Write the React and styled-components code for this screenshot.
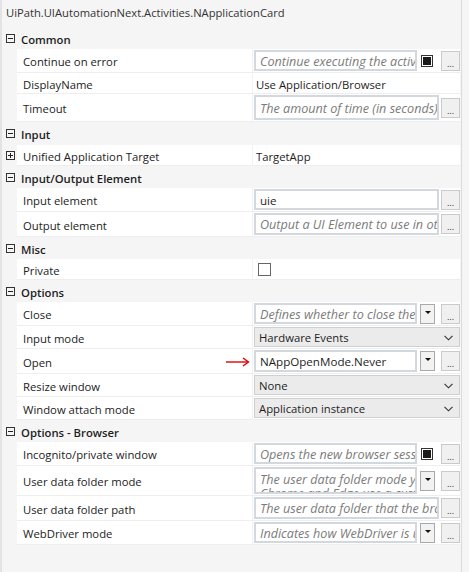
import React from 'react';
import styled, { createGlobalStyle } from 'styled-components';

const GlobalStyle = createGlobalStyle`
    html, body {
        margin: 0;
        padding: 0;
        background: #f5f5f5;
    }
    body {
        font-family: "Open Sans", "Noto Sans", sans-serif;
        font-size: 11.3px;
        color: #222;
    }
`;

const Window = styled.div`
    display: flex;
    width: 469px;
    height: 572px;
    overflow: hidden;
    background: #f5f5f5;
`;

const Panel = styled.div`
    display: flex;
    flex-direction: column;
    width: 458px;
    border-left: 2px solid #e3e3e3;
    border-right: 1px solid #dcdcdc;
    padding-right: 1px;
`;

const Title = styled.div`
    height: 28px;
    display: flex;
    align-items: center;
    padding-left: 4px;
    padding-bottom: 4px;
    box-sizing: border-box;
    color: #333;
    font-size: 11.2px;
`;

const CategoryRow = styled.div`
    height: ${p => p.$h}px;
    display: flex;
    align-items: center;
    font-weight: 600;
    color: #1e1e1e;
`;

const CategoryName = styled.span`
    padding: 2px 0 0 4px;
`;

const Gutter = styled.div`
    width: 15px;
    flex: none;
    display: flex;
    align-items: center;
    justify-content: center;
    align-self: stretch;
`;

const ExpandBox = styled.span`
    position: relative;
    width: 9px;
    height: 9px;
    box-sizing: border-box;
    border: 1px solid #333;
    margin-left: 1px;

    &:before {
        content: "";
        position: absolute;
        left: 1px;
        right: 1px;
        top: 3px;
        height: 1px;
        background: #222;
    }

    &:after {
        content: "";
        display: ${p => (p.$plus ? 'block' : 'none')};
        position: absolute;
        top: 1px;
        bottom: 1px;
        left: 3px;
        width: 1px;
        background: #222;
    }
`;

const PropRow = styled.div`
    display: flex;
    height: ${p => p.$h}px;
    box-sizing: border-box;
`;

const Cells = styled.div`
    flex: 1;
    display: grid;
    grid-template-columns: 236px 1fr;
    grid-template-rows: minmax(0, 1fr);
    overflow: hidden;
    background: #fff;
    border-bottom: 1px solid #eeeeee;
`;

const Label = styled.div`
    display: flex;
    align-items: center;
    padding: 2px 0 0 6px;
    border-right: 1px solid #f2f2f2;
    white-space: nowrap;
    overflow: hidden;
    color: #222;
`;

const Value = styled.div`
    display: flex;
    align-items: center;
    padding-left: 1px;
    min-width: 0;
    min-height: 0;
`;

const PlainValue = styled.span`
    padding: 2px 0 0 2px;
    color: #1e1e1e;
`;

const TextBox = styled.div`
    flex: 1;
    min-width: 0;
    min-height: 0;
    align-self: stretch;
    margin: 1px 0;
    box-sizing: border-box;
    border: 2px solid #d2d8de;
    background: #fff;
    padding: ${p => (p.$wrap ? '4px 0 0 4px' : '1px 0 0 4px')};
    display: flex;
    align-items: ${p => (p.$wrap ? 'flex-start' : 'center')};
    overflow: hidden;
    white-space: ${p => (p.$wrap ? 'normal' : 'nowrap')};
    font-style: ${p => (p.$hint ? 'italic' : 'normal')};
    font-size: ${p => (p.$hint ? 12.6 : 11.6)}px;
    color: ${p => (p.$hint ? '#7b7b7b' : '#1e1e1e')};
    line-height: ${p => (p.$wrap ? '14px' : 'normal')};
`;

/* the wrapped hint is wider than the box, so its first line is clipped too */
const WrapText = styled.span`
    display: block;
    flex: none;
    width: 250px;
`;

const DotsButton = styled.div`
    width: 19px;
    height: 20px;
    flex: none;
    margin-left: 2px;
    box-sizing: border-box;
    border: 1px solid #cacaca;
    background: #f0f0f0;
    display: flex;
    align-items: flex-end;
    justify-content: center;
    font-size: 9px;
    line-height: 13px;
    color: #333;
`;

const DropButton = styled.div`
    width: 15px;
    height: 20px;
    flex: none;
    margin: 0 4px 0 3px;
    box-sizing: border-box;
    border: 1px solid #a9a9a9;
    background: #f2f2f2;
    display: flex;
    justify-content: center;
    padding-top: 6px;

    &:before {
        content: "";
        width: 0;
        height: 0;
        border-left: 3px solid transparent;
        border-right: 3px solid transparent;
        border-top: 3px solid #111;
    }
`;

const CheckBox = styled.div`
    width: ${p => p.$size}px;
    height: ${p => p.$size}px;
    flex: none;
    box-sizing: border-box;
    margin: ${p => p.$margin};
    border: 1px solid ${p => (p.$checked ? '#333' : '#666')};
    background: #fff;
    display: flex;
    align-items: center;
    justify-content: center;

    &:before {
        content: "";
        display: ${p => (p.$checked ? 'block' : 'none')};
        width: 8px;
        height: 8px;
        background: #1a1a1a;
    }
`;

const Combo = styled.div`
    flex: 1;
    height: 20px;
    box-sizing: border-box;
    border: 1px solid #d0d0d0;
    background: #ebebeb;
    display: flex;
    align-items: center;
    justify-content: space-between;
    padding: 1px 6px 0 4px;
    color: #1e1e1e;
`;

const Arrow = styled.svg`
    margin-left: auto;
    margin-right: 2px;
    flex: none;
`;

const Chevron = () => (
    <svg width="9" height="6" viewBox="0 0 9 6">
        <polyline points="0.5,0.8 4.5,4.8 8.5,0.8" fill="none" stroke="#333" strokeWidth="1.1" />
    </svg>
);

const Category = ({ name, h }) => (
    <CategoryRow $h={h}>
        <Gutter><ExpandBox /></Gutter>
        <CategoryName>{name}</CategoryName>
    </CategoryRow>
);

const Prop = ({ label, h, plus, arrow, children }) => (
    <PropRow $h={h}>
        <Gutter>{plus && <ExpandBox $plus />}</Gutter>
        <Cells>
            <Label>
                {label}
                {arrow && (
                    <Arrow width="24" height="10" viewBox="0 0 24 10">
                        <line x1="0" y1="5" x2="22" y2="5" stroke="#e00000" strokeWidth="1.4" />
                        <polyline points="17,1 22.5,5 17,9" fill="none" stroke="#e00000" strokeWidth="1.4" />
                    </Arrow>
                )}
            </Label>
            <Value>{children}</Value>
        </Cells>
    </PropRow>
);

export default function App() {
    return (
        <Window>
            <GlobalStyle />
            <Panel>
                <Title>UiPath.UIAutomationNext.Activities.NApplicationCard</Title>

                <Category name="Common" h={21} />
                <Prop label="Continue on error" h={24}>
                    <TextBox $hint>Continue executing the activities in the automation even if the activity fails.</TextBox>
                    <CheckBox $checked $size={12} $margin="0 6px 0 4px" />
                    <DotsButton>...</DotsButton>
                </Prop>
                <Prop label="DisplayName" h={21}>
                    <PlainValue>Use Application/Browser</PlainValue>
                </Prop>
                <Prop label="Timeout" h={28}>
                    <TextBox $hint>The amount of time (in seconds) to wait for the operation to complete.</TextBox>
                    <DotsButton>...</DotsButton>
                </Prop>

                <Category name="Input" h={23} />
                <Prop label="Unified Application Target" h={21} plus>
                    <PlainValue>TargetApp</PlainValue>
                </Prop>

                <Category name="Input/Output Element" h={22} />
                <Prop label="Input element" h={24}>
                    <TextBox>uie</TextBox>
                    <DotsButton>...</DotsButton>
                </Prop>
                <Prop label="Output element" h={25}>
                    <TextBox $hint>Output a UI Element to use in other activities as an Input UI Element.</TextBox>
                    <DotsButton>...</DotsButton>
                </Prop>

                <Category name="Misc" h={22} />
                <Prop label="Private" h={21}>
                    <CheckBox $size={13} $margin="0 0 0 4px" />
                </Prop>

                <Category name="Options" h={22} />
                <Prop label="Close" h={24}>
                    <TextBox $hint>Defines whether to close the target application at the end.</TextBox>
                    <DropButton />
                    <DotsButton>...</DotsButton>
                </Prop>
                <Prop label="Input mode" h={23}>
                    <Combo>Hardware Events<Chevron /></Combo>
                </Prop>
                <Prop label="Open" h={25} arrow>
                    <TextBox>NAppOpenMode.Never</TextBox>
                    <DropButton />
                    <DotsButton>...</DotsButton>
                </Prop>
                <Prop label="Resize window" h={23}>
                    <Combo>None<Chevron /></Combo>
                </Prop>
                <Prop label="Window attach mode" h={23}>
                    <Combo>Application instance<Chevron /></Combo>
                </Prop>

                <Category name="Options - Browser" h={22} />
                <Prop label="Incognito/private window" h={24}>
                    <TextBox $hint>Opens the new browser session in an incognito/private window.</TextBox>
                    <CheckBox $checked $size={12} $margin="0 6px 0 4px" />
                    <DotsButton>...</DotsButton>
                </Prop>
                <Prop label="User data folder mode" h={30}>
                    <TextBox $hint $wrap>
                        <WrapText>The user data folder mode you want to use. Chrome and Edge use a custom folder.</WrapText>
                    </TextBox>
                    <DropButton />
                    <DotsButton>...</DotsButton>
                </Prop>
                <Prop label="User data folder path" h={25}>
                    <TextBox $hint>The user data folder that the browser uses when it starts.</TextBox>
                    <DotsButton>...</DotsButton>
                </Prop>
                <Prop label="WebDriver mode" h={24}>
                    <TextBox $hint>Indicates how WebDriver is used when opening the browser.</TextBox>
                    <DropButton />
                    <DotsButton>...</DotsButton>
                </Prop>
            </Panel>
        </Window>
    );
}
